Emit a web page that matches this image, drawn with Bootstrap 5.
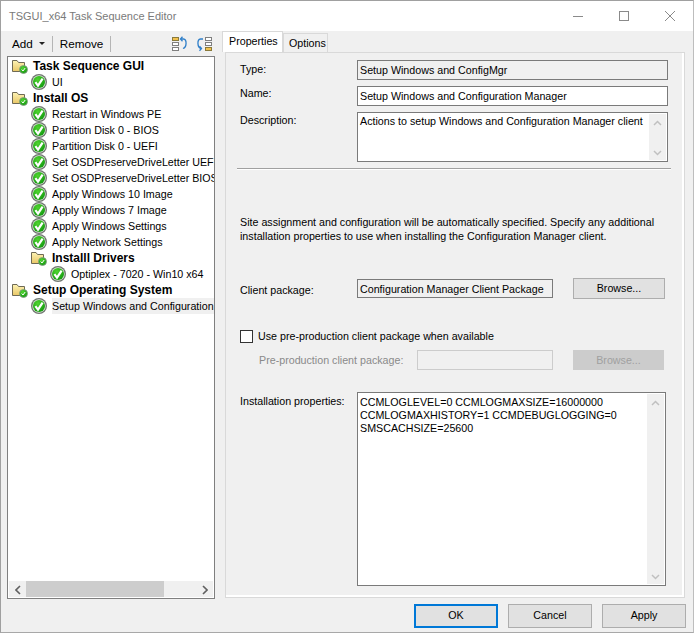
<!DOCTYPE html>
<html lang="en">
  <head>
    <meta charset="UTF-8" />
    <title>TSGUI_x64 Task Sequence Editor</title>
    <link rel="stylesheet" href="https://cdn.jsdelivr.net/npm/bootstrap@5.3.0/dist/css/bootstrap.min.css" />
    <style>
      html, body { height: 100%; }
      body { background: #f0f0f0; font-family: "Liberation Sans", Arial, sans-serif; font-size: 10.7px; line-height: 16px; color: #000; overflow: hidden; }
      .app-window { width: 694px; height: 633px; border: 1px solid #a0a0a0; border-right-color: #bdbdbd; border-bottom-color: #a8a8a8; }
      .title-bar { height: 30px; background: #fff; }
      .title-text { font-size: 11px; color: #7a7a7a; padding-left: 8px; }
      .win-btn { width: 46px; height: 30px; }
      .work-area { height: 568px; padding: 0 7px 0 6px; }
      .left-side { width: 208px; }
      .tool-strip { height: 25px; padding-left: 5px; padding-right: 3px; font-size: 11.7px; }
      .tool-sep { width: 1px; height: 16px; background: #b5b5b5; margin: 0 7px; }
      .caret-mini { width: 0; height: 0; border: 3px solid transparent; border-top: 3px solid #222; border-bottom: 0; margin-left: 6px; }
      .tree-box { height: 543px; background: #fff; border: 1px solid #7f7f7f; }
      .tree-scroll { height: 521px; padding-top: 1px; overflow: hidden; white-space: nowrap; }
      .tree-row { height: 16px; display: flex; align-items: center; }
      .tree-row svg { flex: none; margin-right: 5px; }
      .tree-row.lvl0 { padding-left: 4px; }
      .tree-row.lvl1 { padding-left: 23px; }
      .tree-row.lvl2 { padding-left: 42px; }
      .tree-bold { font-weight: 700; font-size: 12px; }
      .tree-sel { background: #f0f0f0; }
      .h-scroll { height: 16px; background: #f0f0f0; margin: 0 1px 1px; }
      .h-arrow { width: 17px; text-align: center; }
      .h-thumb { width: 138px; height: 16px; background: #cdcdcd; }
      .right-side { width: 463px; margin-left: 7px; }
      .tab-strip { height: 21px; align-items: flex-end; }
      .tab-item { height: 19px; padding: 0 5px; border: 1px solid #d9d9d9; border-bottom: 0; background: #f0f0f0; line-height: 18px; width: 45px; }
      .tab-item.on { height: 21px; background: #fff; line-height: 18px; width: 61px; padding: 0 6px; }
      .tab-body { height: 546px; margin-left: 3px; border: 1px solid #d9d9d9; border-bottom-width: 1px; background: #f0f0f0; box-shadow: inset 0 -2px 0 #fff, inset -2px 0 0 #fff; padding: 7px 16px 0 14px; }
      .form-line { display: flex; }
      .field-name { width: 117px; flex: none; }
      .fake-input { border: 1px solid #7a7a7a; padding: 0 2px; height: 20px; background: #fff; line-height: 18px; white-space: nowrap; }
      .fake-input.ro { background: #f0f0f0; }
      .fake-area { border: 1px solid #7a7a7a; background: #fff; padding: 2px; position: relative; line-height: 13px; white-space: nowrap; }
      .v-scroll { position: absolute; top: 1px; right: 1px; bottom: 1px; width: 17px; background: #f0f0f0; }
      .v-scroll svg { position: absolute; left: 4px; }
      .up-a { top: 6px; }
      .down-a { bottom: 4px; }
      .rule-line { border-top: 1px solid #a0a0a0; border-bottom: 1px solid #fff; margin: 6px -3px 0; }
      .win-button { background: #e1e1e1; border: 1px solid #adadad; height: 21px; line-height: 19px; text-align: center; padding: 0; border-radius: 0; color: #000; font-size: 10.7px; }
      .win-button.off { color: #a0a0a0; background: #ccc; border-color: #ccc; height: 20px; width: 91px; }
      .win-button.main { border: 2px solid #0078d7; }
      .foot-bar { height: 24px; margin-top: 5px; padding-right: 7px; gap: 10px; }
      .foot-bar .win-button { width: 84px; height: 24px; padding-bottom: 2px; }
      .check-box { width: 13px; height: 13px; border: 1px solid #333; background: #fff; flex: none; }
      .muted-text { color: #8a8a8a; }
      .gap-six { margin-bottom: 6px; }
      .lbl-type { padding-top: 1px; }
      .lbl-name { margin-top: -1px; }
      .lbl-pkg { padding-top: 4px; }
      .lbl-inst { padding-top: 1px; }
      .desc-area { height: 50px; }
      .intro-text { margin-top: 45px; line-height: 14px; white-space: nowrap; }
      .pkg-line { margin-top: 35px; }
      .pkg-box { width: 196px; margin-top: 1px; height: 19px; }
      .browse-btn { width: 92px; margin-left: 20px; }
      .check-line { margin-top: 29px; gap: 5px; }
      .pre-line { margin-top: 6px; }
      .pre-label { width: 177px; padding-left: 19px; padding-top: 2px; flex: none; }
      .pre-box { width: 136px; background: #f0f0f0; border-color: #ccc; margin-top: 0; height: 20px; }
      .inst-line { margin-top: 22px; margin-right: 2px; }
      .inst-area { height: 194px; padding-top: 3px; }
    </style>
  </head>
  <body>
    <svg width="0" height="0" class="d-block">
      <defs>
        <radialGradient id="okBall" cx=".4" cy=".3" r=".8">
          <stop offset="0" stop-color="#4fd42e" /><stop offset="1" stop-color="#0c930c" />
        </radialGradient>
        <linearGradient id="folderFill" x1="0" y1="0" x2="0" y2="1">
          <stop offset="0" stop-color="#fdf3b5" /><stop offset="1" stop-color="#e9c766" />
        </linearGradient>
        <symbol id="stepOk" viewBox="0 0 16 16">
          <circle cx="8" cy="8" r="8" fill="#6f766f" />
          <circle cx="8" cy="8" r="6.7" fill="#dfe8da" />
          <circle cx="8" cy="8" r="6" fill="url(#okBall)" />
          <path d="M4.4 8.2l2.6 3.4 4.6-7" fill="none" stroke="#fff" stroke-width="2.2" />
        </symbol>
        <symbol id="groupOk" viewBox="0 0 16 16">
          <path d="M.5 2.5V13.5H12.5V4.5H6.5L5 2.5Z" fill="url(#folderFill)" stroke="#6f6a55" />
          <circle cx="11.5" cy="11.5" r="4" fill="url(#okBall)" stroke="#8a9a8a" stroke-width=".8" />
          <path d="M9.7 11.5l1.3 1.5 2.2-3" fill="none" stroke="#fff" />
        </symbol>
      </defs>
    </svg>
    <div class="app-window">
      <div class="title-bar d-flex align-items-center justify-content-between">
        <div class="title-text">TSGUI_x64 Task Sequence Editor</div>
        <div class="d-flex">
          <div class="win-btn d-flex align-items-center justify-content-center">
            <svg width="10" height="10"><path d="M0 5.5H10" stroke="#8a8a8a" /></svg>
          </div>
          <div class="win-btn d-flex align-items-center justify-content-center">
            <svg width="10" height="10"><rect x=".5" y=".5" width="9" height="9" fill="none" stroke="#8a8a8a" /></svg>
          </div>
          <div class="win-btn d-flex align-items-center justify-content-center">
            <svg width="10" height="10"><path d="M0 0L10 10M10 0L0 10" stroke="#8a8a8a" /></svg>
          </div>
        </div>
      </div>
      <div class="work-area d-flex">
        <div class="left-side">
          <div class="tool-strip d-flex align-items-center">
            <span>Add</span><span class="caret-mini"></span>
            <span class="tool-sep"></span>
            <span>Remove</span>
            <span class="tool-sep"></span>
            <span class="ms-auto d-flex gap-2">
              <svg width="16" height="16" viewBox="0 0 16 16">
                <rect x=".5" y="1.5" width="6" height="3" fill="#f2c14e" stroke="#8a7a3a" />
                <rect x=".5" y="6.5" width="6" height="3" fill="#fff" stroke="#7f7f7f" />
                <rect x=".5" y="11.5" width="6" height="3" fill="#fff" stroke="#7f7f7f" />
                <path d="M9 3H11.5C15 3.5 15 11 11 12.5" fill="none" stroke="#2f7fc9" stroke-width="1.3" />
                <path d="M10.5 .8L8.5 3L10.5 5.2" fill="none" stroke="#2f7fc9" stroke-width="1.3" />
              </svg>
              <svg width="16" height="16" viewBox="0 0 16 16">
                <rect x="9.5" y="1.5" width="6" height="3" fill="#fff" stroke="#7f7f7f" />
                <rect x="9.5" y="6.5" width="6" height="3" fill="#fff" stroke="#7f7f7f" />
                <rect x="9.5" y="11.5" width="6" height="3" fill="#f2c14e" stroke="#8a7a3a" />
                <path d="M7 3H4.5C1 3.5 1 11 5 12.5" fill="none" stroke="#2f7fc9" stroke-width="1.3" />
                <path d="M3.5 10.3L5.5 12.5L3.5 14.7" fill="none" stroke="#2f7fc9" stroke-width="1.3" />
              </svg>
            </span>
          </div>
          <div class="tree-box d-flex flex-column">
            <div class="tree-scroll flex-grow-1" id="stepTree"></div>
            <div class="h-scroll d-flex align-items-center">
              <div class="h-arrow"><svg width="6" height="10"><path d="M5 1L1 5L5 9" fill="none" stroke="#606060" stroke-width="1.6" /></svg></div>
              <div class="h-thumb"></div>
              <div class="h-arrow ms-auto"><svg width="6" height="10"><path d="M1 1L5 5L1 9" fill="none" stroke="#606060" stroke-width="1.6" /></svg></div>
            </div>
          </div>
        </div>
        <div class="right-side">
          <div class="tab-strip d-flex">
            <div class="tab-item on">Properties</div>
            <div class="tab-item">Options</div>
          </div>
          <div class="tab-body">
            <div class="form-line gap-six">
              <div class="field-name lbl-type">Type:</div>
              <div class="fake-input ro flex-grow-1">Setup Windows and ConfigMgr</div>
            </div>
            <div class="form-line gap-six">
              <div class="field-name lbl-name">Name:</div>
              <div class="fake-input flex-grow-1">Setup Windows and Configuration Manager</div>
            </div>
            <div class="form-line">
              <div class="field-name">Description:</div>
              <div class="fake-area flex-grow-1 desc-area">Actions to setup Windows and Configuration Manager client
                <div class="v-scroll">
                  <svg width="9" height="6" class="up-a"><path d="M1 5L4.5 1.5L8 5" fill="none" stroke="#c0c0c0" stroke-width="1.5" /></svg>
                  <svg width="9" height="6" class="down-a"><path d="M1 1L4.5 4.5L8 1" fill="none" stroke="#c0c0c0" stroke-width="1.5" /></svg>
                </div>
              </div>
            </div>
            <div class="rule-line"></div>
            <div class="intro-text">Site assignment and configuration will be automatically specified. Specify any additional<br />installation properties to use when installing the Configuration Manager client.</div>
            <div class="form-line pkg-line">
              <div class="field-name lbl-pkg">Client package:</div>
              <div class="fake-input ro pkg-box">Configuration Manager Client Package</div>
              <button class="win-button browse-btn" type="button">Browse...</button>
            </div>
            <div class="d-flex align-items-center check-line">
              <span class="check-box"></span><span>Use pre-production client package when available</span>
            </div>
            <div class="form-line pre-line">
              <div class="muted-text pre-label">Pre-production client package:</div>
              <div class="fake-input ro pkg-box pre-box"></div>
              <button class="win-button off browse-btn" type="button">Browse...</button>
            </div>
            <div class="form-line inst-line">
              <div class="field-name lbl-inst">Installation properties:</div>
              <div class="fake-area flex-grow-1 inst-area">CCMLOGLEVEL=0 CCMLOGMAXSIZE=16000000<br />CCMLOGMAXHISTORY=1 CCMDEBUGLOGGING=0<br />SMSCACHSIZE=25600
                <div class="v-scroll">
                  <svg width="9" height="6" class="up-a"><path d="M1 5L4.5 1.5L8 5" fill="none" stroke="#c0c0c0" stroke-width="1.5" /></svg>
                  <svg width="9" height="6" class="down-a"><path d="M1 1L4.5 4.5L8 1" fill="none" stroke="#c0c0c0" stroke-width="1.5" /></svg>
                </div>
              </div>
            </div>
          </div>
        </div>
      </div>
      <div class="foot-bar d-flex justify-content-end">
        <button class="win-button main" type="button">OK</button>
        <button class="win-button" type="button">Cancel</button>
        <button class="win-button" type="button">Apply</button>
      </div>
    </div>
    <script>
      // task sequence tree
      const steps = [
        [0, 'g', 'Task Sequence GUI'], [1, 's', 'UI'],
        [0, 'g', 'Install OS'],
        [1, 's', 'Restart in Windows PE'], [1, 's', 'Partition Disk 0 - BIOS'], [1, 's', 'Partition Disk 0 - UEFI'],
        [1, 's', 'Set OSDPreserveDriveLetter UEFI'], [1, 's', 'Set OSDPreserveDriveLetter BIOS'],
        [1, 's', 'Apply Windows 10 Image'], [1, 's', 'Apply Windows 7 Image'],
        [1, 's', 'Apply Windows Settings'], [1, 's', 'Apply Network Settings'],
        [1, 'g', 'Installl Drivers'], [2, 's', 'Optiplex - 7020 - Win10 x64'],
        [0, 'g', 'Setup Operating System'], [1, 's', 'Setup Windows and Configuration Manager', true]
      ];
      document.getElementById('stepTree').innerHTML = steps.map(([lvl, kind, label, sel]) => `
        <div class="tree-row lvl${lvl}">
          <svg width="16" height="16"><use href="#${kind === 'g' ? 'groupOk' : 'stepOk'}" /></svg>
          <span class="${kind === 'g' ? 'tree-bold' : ''} ${sel ? 'tree-sel' : ''}">${label}</span>
        </div>`).join('');
    </script>
  </body>
</html>
